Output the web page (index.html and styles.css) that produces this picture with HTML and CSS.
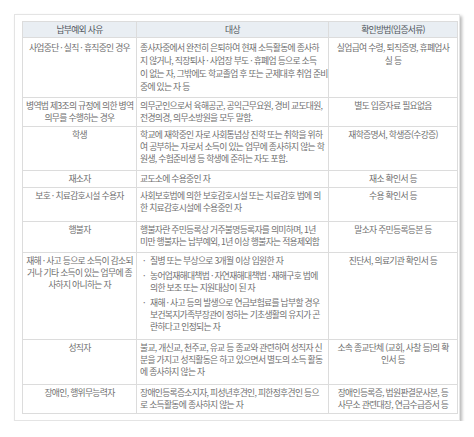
FILE: index.html
```html
<!DOCTYPE html>
<html lang="ko">
<head>
<meta charset="utf-8">
<link rel="stylesheet" href="styles.css">
</head>
<body>
<div class="card">
  <table class="tbl">
    <colgroup>
      <col class="c1"><col class="c2"><col class="c3">
    </colgroup>
    <thead>
      <tr class="hd">
        <th>납부예외 사유</th>
        <th>대상</th>
        <th>확인방법(입증서류)</th>
      </tr>
    </thead>
    <tbody>
      <tr class="r1">
        <td class="reason">사업중단 · 실직 · 휴직중인 경우</td>
        <td class="target">종사자중에서 완전히 은퇴하여 현재 소득활동에 종사하<br>지 않거나, 직장퇴사 · 사업장 부도 · 휴폐업 등으로 소득<br>이 없는 자, 그밖에도 학교졸업 후 또는 군제대후 취업 준비<br>중에 있는 자 등</td>
        <td class="proof">실업급여 수령, 퇴직증명, 휴폐업사<br>실 등</td>
      </tr>
      <tr class="r2">
        <td class="reason">병역법 제3조의 규정에 의한 병역<br>의무를 수행하는 경우</td>
        <td class="target">의무군인으로서 육해공군, 공익근무요원, 경비 교도대원,<br>전경의경, 의무소방원을 모두 말함.</td>
        <td class="proof">별도 입증자료 필요없음</td>
      </tr>
      <tr class="r3">
        <td class="reason">학생</td>
        <td class="target">학교에 재학중인 자로 사회통념상 진학 또는 취학을 위하<br>여 공부하는 자로서 소득이 있는 업무에 종사하지 않는 학<br>원생, 수험준비생 등 학생에 준하는 자도 포함.</td>
        <td class="proof">재학증명서, 학생증(수강증)</td>
      </tr>
      <tr class="r4">
        <td class="reason">재소자</td>
        <td class="target">교도소에 수용중인 자</td>
        <td class="proof">재소 확인서 등</td>
      </tr>
      <tr class="r5">
        <td class="reason">보호 · 치료감호시설 수용자</td>
        <td class="target">사회보호법에 의한 보호감호시설 또는 치료감호 법에 의<br>한 치료감호시설에 수용중인 자</td>
        <td class="proof">수용 확인서 등</td>
      </tr>
      <tr class="r6">
        <td class="reason">행불자</td>
        <td class="target">행불자란 주민등록상 거주불명등록자를 의미하며, 1년<br>미만 행불자는 납부예외, 1년 이상 행불자는 적용제외함</td>
        <td class="proof">말소자 주민등록등본 등</td>
      </tr>
      <tr class="r7">
        <td class="reason">재해 · 사고 등으로 소득이 감소되<br>거나 기타 소득이 있는 업무에 종<br>사하지 아니하는 자</td>
        <td class="target">
          <ul class="dots">
            <li>질병 또는 부상으로 3개월 이상 입원한 자</li>
            <li>농어업재해대책법 · 자연재해대책법 · 재해구호 법에<br>의한 보조 또는 지원대상이 된 자</li>
            <li>재해 · 사고 등의 발생으로 연금보험료를 납부할 경우<br>보건복지가족부장관이 정하는 기초생활의 유지가 곤<br>란하다고 인정되는 자</li>
          </ul>
        </td>
        <td class="proof">진단서, 의료기관 확인서 등</td>
      </tr>
      <tr class="r8">
        <td class="reason">성직자</td>
        <td class="target">불교, 개신교, 천주교, 유교 등 종교와 관련하여 성직자 신<br>분을 가지고 성직활동은 하고 있으면서 별도의 소득 활동<br>에 종사하지 않는 자</td>
        <td class="proof">소속 종교단체 (교회, 사찰 등)의 확<br>인서 등</td>
      </tr>
      <tr class="r9">
        <td class="reason">장애인, 행위무능력자</td>
        <td class="target">장애인등록증소지자, 피성년후견인, 피한정후견인 등으<br>로 소득활동에 종사하지 않는 자</td>
        <td class="proof">장애인등록증, 법원판결문사본, 등<br>사무소 관련대장, 연금수급증서 등</td>
      </tr>
    </tbody>
  </table>
</div>
</body>
</html>
```

FILE: styles.css
```css
html, body {
  margin: 0;
  padding: 0;
  background: #ffffff;
}

body {
  font-family: "Noto Sans CJK KR", "Noto Sans", sans-serif;
  font-size: 8.8px;
  letter-spacing: -0.7px;
  color: #6f6f6f;
}

.card {
  box-sizing: border-box;
  width: 446px;
  margin: 14px 0 0 14px;
  padding: 6px 1px 6px 7px;
  border: 1px solid #e4e4e4;
  background: #fff;
  box-shadow: 2px 2px 3px rgba(0, 0, 0, 0.28);
}

.tbl {
  width: 435px;
  border-collapse: collapse;
  table-layout: fixed;
  border: 1px solid #d9d9d9;
}

.c1 { width: 114px; }
.c2 { width: 192px; }
.c3 { width: 129px; }

.tbl th,
.tbl td {
  border: 1px solid #dcdcdc;
  line-height: 12px;
  vertical-align: top;
  padding: 2px 3px 2px 3px;
  white-space: nowrap;
  overflow: hidden;
}

.tbl th {
  background: #e9eef3;
  color: #4f555b;
  font-weight: normal;
  text-align: center;
  vertical-align: middle;
  padding: 1px 3px;
  height: 13px;
}

.reason { text-align: center; }
.target { text-align: left; }
.proof { text-align: center; }

.dots {
  list-style: none;
  margin: 0;
  padding: 0;
}

.dots li {
  position: relative;
  padding-left: 10px;
  margin-bottom: 3px;
}

.dots li::before {
  content: "·";
  position: absolute;
  left: 3px;
  top: 0;
}

.r1 { height: 60px; }
.r1 td { line-height: 13px; padding-top: 3px; }
.r2 { height: 29px; }
.r3 { height: 44px; }
.r4 { height: 17px; }
.r5 { height: 34px; }
.r6 { height: 31px; }
.r7 { height: 87px; }
.r8 { height: 45px; }
.r9 { height: 29px; }
```
